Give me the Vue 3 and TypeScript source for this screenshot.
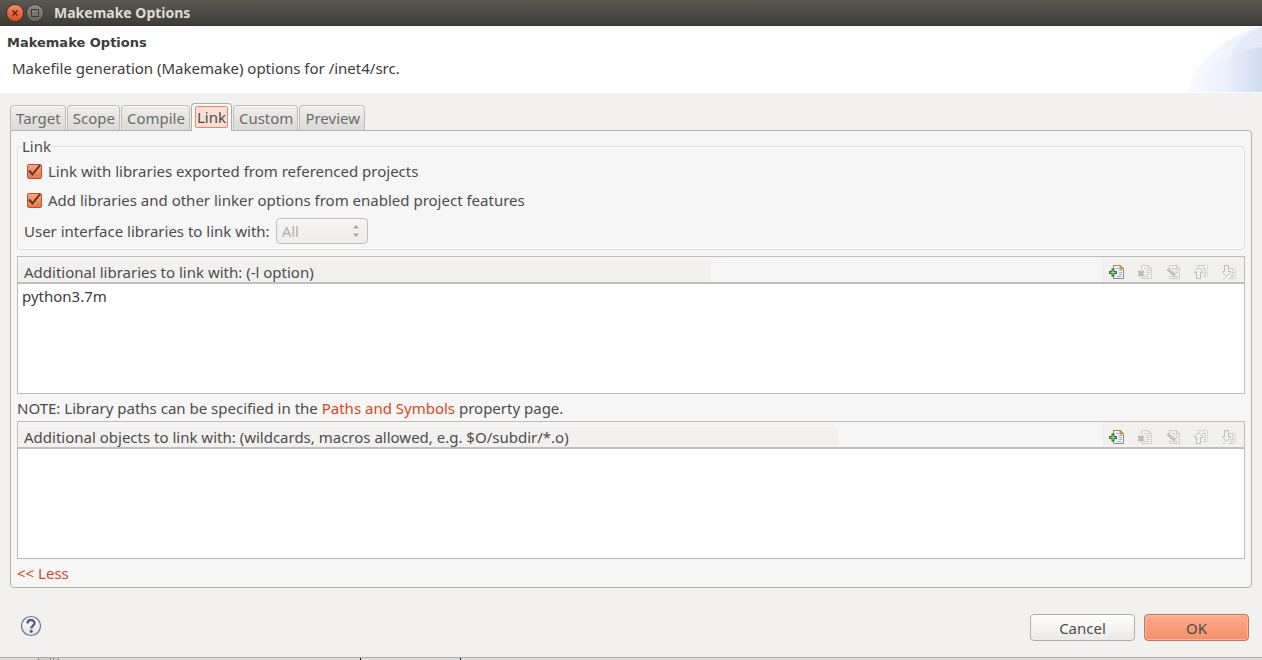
<script setup lang="ts">
import { ref } from 'vue'

interface Tool {
  id: string
  label: string
  disabled: boolean
}

interface ListBox {
  id: string
  title: string
  items: string[]
}

const tabs: string[] = ['Target', 'Scope', 'Compile', 'Link', 'Custom', 'Preview']
const activeTab = ref('Link')
const exported = ref(true)
const features = ref(true)
const uiLibs = ref('All')

const tools: Tool[] = [
  { id: 'add', label: 'Add', disabled: false },
  { id: 'remove', label: 'Delete', disabled: true },
  { id: 'edit', label: 'Edit', disabled: true },
  { id: 'up', label: 'Move up', disabled: true },
  { id: 'down', label: 'Move down', disabled: true },
]

const libraries: ListBox = {
  id: 'libs',
  title: 'Additional libraries to link with: (-l option)',
  items: ['python3.7m'],
}
const objects: ListBox = {
  id: 'objs',
  title: 'Additional objects to link with: (wildcards, macros allowed, e.g. $O/subdir/*.o)',
  items: [],
}
const lists: ListBox[] = [libraries, objects]
</script>

<template>
  <div class="window">
    <header class="titlebar">
      <button class="wm close" type="button" aria-label="Close">
        <svg width="16" height="16" viewBox="0 0 16 16"><path d="M5.500 5.500l5 5M10.500 5.500l-5 5" stroke="#57200f" stroke-width="1.400" /></svg>
      </button>
      <button class="wm max" type="button" aria-label="Maximize">
        <svg width="16" height="16" viewBox="0 0 16 16"><rect x="4.500" y="4.500" width="7" height="7" fill="none" stroke="#3a3935" /></svg>
      </button>
      <span class="caption">Makemake Options</span>
    </header>

    <section class="banner">
      <div class="banner-text">
        <h1>Makemake Options</h1>
        <p>Makefile generation (Makemake) options for /inet4/src.</p>
      </div>
      <svg class="swoosh" width="75" height="66" viewBox="0 0 75 66" aria-hidden="true">
        <defs>
          <linearGradient id="sw1" x1="0" x2="1"><stop offset="0" stop-color="#f8fafe" /><stop offset="1" stop-color="#e9effa" /></linearGradient>
          <linearGradient id="sw2" x1="0" x2="1"><stop offset="0" stop-color="#f8faff" /><stop offset=".5" stop-color="#ecf1fb" /><stop offset="1" stop-color="#d0dbf3" /></linearGradient>
        </defs>
        <path d="M0 66C3 44 34 11 75 0V66Z" fill="url(#sw1)" />
        <path d="M44 30C50 16 60 7 75 1V30Z" fill="#dfe7f8" opacity=".7" />
        <path d="M0 66C4 56 8 52 14 48C32 35 52 24 75 21V66Z" fill="url(#sw2)" />
      </svg>
    </section>

    <main class="content">
      <div class="tabs" role="tablist">
        <button
          v-for="t in tabs"
          :key="t"
          type="button"
          role="tab"
          class="tab"
          :class="{ active: t === activeTab }"
          :aria-selected="t === activeTab"
          @click="activeTab = t"
        ><span>{{ t }}</span></button>
      </div>

      <div class="panel" role="tabpanel">
        <fieldset class="group">
          <legend>Link</legend>
          <label class="check">
            <span class="box">
              <input v-model="exported" type="checkbox" />
              <svg v-if="exported" width="18" height="18" viewBox="0 0 18 18"><path d="M5 8.500L8.500 12.500L16 3" fill="none" stroke="#5e3425" stroke-width="2" /></svg>
            </span>
            Link with libraries exported from referenced projects
          </label>
          <label class="check">
            <span class="box">
              <input v-model="features" type="checkbox" />
              <svg v-if="features" width="18" height="18" viewBox="0 0 18 18"><path d="M5 8.500L8.500 12.500L16 3" fill="none" stroke="#5e3425" stroke-width="2" /></svg>
            </span>
            Add libraries and other linker options from enabled project features
          </label>
          <div class="row">
            <label for="ui-libs">User interface libraries to link with:</label>
            <span class="combo">
              <select id="ui-libs" v-model="uiLibs" disabled>
                <option>All</option>
              </select>
              <svg width="8" height="14" viewBox="0 0 8 14"><path d="M1 4.500L4 1L7 4.500ZM1 9.500L4 13L7 9.500Z" fill="#a9a6a2" /></svg>
            </span>
          </div>
        </fieldset>

        <template v-for="(l, i) in lists" :key="l.id">
          <section class="list">
            <div class="list-head">
              <span :id="l.id" class="list-title">{{ l.title }}</span>
              <div class="tools">
                <button v-for="t in tools" :key="t.id" type="button" :aria-label="t.label" :disabled="t.disabled">
                  <svg v-if="t.id === 'add'" width="16" height="16" viewBox="0 0 16 16">
                    <path d="M4.500 1.500H11.500L14.500 4.500V14.500H4.500Z" fill="#f1f6fe" stroke="#8f8d68" />
                    <path d="M4 1.500H11.500M4.500 1V5" stroke="#b08a28" />
                    <path d="M11 1.500V5H14.500Z" fill="#e9a94e" stroke="#c98b33" />
                    <path d="M7 4.500H10M10 6.500H13M10 8.500H13M10 10.500H13M8 12.500H12" stroke="#92acdc" />
                    <path d="M2.500 4.500H5.500V7H8V10H5.500V12.500H2.500V10H0V7H2.500Z" fill="#1e7f45" />
                    <path d="M4 6V11M1.500 8.500H6.500" stroke="#b5dc6a" />
                  </svg>
                  <svg v-else-if="t.id === 'remove'" width="16" height="16" viewBox="0 0 16 16">
                    <path d="M4.500 6V1.500H11.500L14.500 4.500V14.500H4.500V12" fill="none" stroke="#d2d0cd" />
                    <path d="M11.500 1.500V4.500H14.500M7 4.500H10M9 6.500H13M9 8.500H13M9 10.500H13M7 12.500H12" fill="none" stroke="#d2d0cd" />
                    <path d="M1.500 7L6.500 12M6.500 7L1.500 12" stroke="#bdbab7" stroke-width="2.600" />
                  </svg>
                  <svg v-else-if="t.id === 'edit'" width="16" height="16" viewBox="0 0 16 16">
                    <path d="M4.500 5V1.500H11.500L14.500 4.500V14.500H4.500V11" fill="none" stroke="#d0cecb" />
                    <path d="M11.500 1.500V4.500H14.500M7 4.500H10M10 6.500H13M11 8.500H13M6 12.500H13" fill="none" stroke="#c9c7c4" />
                    <path d="M2.500 5L10 11" stroke="#b9b6b3" stroke-width="3" />
                    <path d="M3.500 5L9 9.500" stroke="#e2e0de" />
                  </svg>
                  <svg v-else-if="t.id === 'up'" width="16" height="16" viewBox="0 0 16 16">
                    <path d="M3 1.500H4M5 1.500H8M9 1.500H12M9 4.500H13M11 6.500H13M11 8.500H13M11 10.500H13M10 12.500H13" stroke="#c9c7c4" />
                    <path d="M14.500 1V13" stroke="#dfddda" />
                    <path d="M5.500 3.500L9.500 7.500V8.500H7.500V14.500H3.500V8.500H1.500V7.500Z" fill="#f1f0ee" stroke="#bebbb8" />
                  </svg>
                  <svg v-else width="16" height="16" viewBox="0 0 16 16">
                    <path d="M9 4.500H13M11 6.500H13M11 8.500H13M10 10.500H13M9 12.500H13M8 14.500H12M2 14.500H4" stroke="#c9c7c4" />
                    <path d="M14.500 4V15" stroke="#dfddda" />
                    <path d="M5.500 12.500L9.500 8.500V7.500H7.500V1.500H3.500V7.500H1.500V8.500Z" fill="#f1f0ee" stroke="#bebbb8" />
                  </svg>
                </button>
              </div>
            </div>
            <ul class="items" role="listbox" :aria-labelledby="l.id">
              <li v-for="item in l.items" :key="item" role="option">{{ item }}</li>
            </ul>
          </section>
          <p v-if="i === 0" class="note">
            NOTE: Library paths can be specified in the <a href="#">Paths and Symbols</a> property page.
          </p>
        </template>
        <p class="less"><a href="#">&lt;&lt; Less</a></p>
      </div>
    </main>

    <footer class="footer">
      <button class="help" type="button" aria-label="Help">
        <svg width="22" height="22" viewBox="0 0 22 22">
          <defs><linearGradient id="hg" x1="0" y1="0" x2="0" y2="1"><stop offset="0" stop-color="#fff" /><stop offset="1" stop-color="#e2e4e6" /></linearGradient></defs>
          <circle cx="11" cy="11" r="9.500" fill="url(#hg)" stroke="#64738c" stroke-width="1.200" />
          <path d="M7.500 8.500C7.500 3.800 14.600 4 14.500 8.200C14.500 10.500 11.200 10.700 11.200 13.600" fill="none" stroke="#4e5f80" stroke-width="2.400" />
          <circle cx="11.200" cy="16.200" r="1.500" fill="#4e5f80" />
        </svg>
      </button>
      <button class="btn" type="button">Cancel</button>
      <button class="btn ok" type="button">OK</button>
    </footer>
    <div class="behind" aria-hidden="true">
      <svg width="480" height="2" viewBox="0 0 480 2">
        <rect x="39" width="20" height="2" fill="#d0cecb" />
        <path d="M38.500 0V2M50.500 0V2M53.500 0V2M58.500 0V2" stroke="#8f8d8b" />
        <path d="M360.500 0V2M460.500 0V2" stroke="#111" />
      </svg>
    </div>
  </div>
</template>

<style>
body {
  margin: 0;
}
</style>

<style scoped>
.window {
  display: flex;
  flex-direction: column;
  min-height: 100vh;
  background: #f2f1f0;
  color: #4c4c4c;
  font: 15px/20px "Noto Sans", "Open Sans", sans-serif;
}
button,
select {
  font: inherit;
  color: inherit;
}
h1,
p,
ul {
  margin: 0;
  padding: 0;
}
a {
  color: #dd4814;
  text-decoration: none;
}
.titlebar {
  display: flex;
  align-items: center;
  gap: 4px;
  height: 26px;
  padding: 0 7px;
  box-sizing: border-box;
  background: linear-gradient(#5b584f, #3d3c37);
  border-bottom: 1px solid #35342f;
}
.wm {
  width: 16px;
  height: 16px;
  padding: 0;
  border: 0;
  border-radius: 50%;
  box-shadow: 0 0 0 1px #38362f;
}
.wm svg {
  display: block;
}
.close {
  background: linear-gradient(#f58763, #de4c1f);
}
.max {
  background: linear-gradient(#8f8d86, #66645d);
}
.caption {
  margin-left: 7px;
  color: #dfdbd2;
  font-size: 14px;
  font-weight: 700;
}
.banner {
  display: flex;
  justify-content: space-between;
  height: 67px;
  background: #fff;
  color: #3c3c3c;
}
.banner-text {
  padding: 7px;
}
h1 {
  font: 700 13px/20px "DejaVu Sans", sans-serif;
}
.banner p {
  padding: 5px;
}
.content {
  flex: 1;
  display: flex;
  flex-direction: column;
  padding: 10px 10px 0;
}
.tabs {
  display: flex;
  align-items: flex-end;
  gap: 1px;
  height: 27px;
}
.tab {
  height: 25px;
  padding: 0 4px 0 5px;
  border: 1px solid #c0bdb9;
  border-bottom: 0;
  border-radius: 4px 4px 0 0;
  background: linear-gradient(#f0efed, #dcdad7);
  box-shadow: inset 0 1px #fafafa;
  color: #6c6c6c;
  line-height: 20px;
}
.tab.active {
  height: 28px;
  margin-bottom: -1px;
  padding: 0 3px 2px;
  border-color: #b0ada9;
  background: #f8f8f7;
  color: #4c4c4c;
  z-index: 1;
}
.tab.active span {
  display: block;
  padding: 0 1px;
  border: 1px solid #ee8963;
  border-radius: 2px;
  background: #f9dfd5;
}
.panel {
  flex: 1;
  display: flex;
  flex-direction: column;
  padding: 6px;
  border: 1px solid #b6b2ad;
  border-radius: 0 4px 4px 4px;
  background: #f6f6f6;
}
.group {
  min-width: 0;
  margin: 0 0 6px;
  padding: 6px;
  border: 1px solid #dcdcdb;
  border-radius: 4px;
  box-shadow: inset 0 0 0 1px #fcfcfc;
}
.group legend {
  height: 18px;
  padding: 0;
  margin-left: -2px;
  line-height: 18px;
}
.check {
  display: flex;
  align-items: center;
  gap: 4px;
  width: max-content;
  height: 20px;
  margin-bottom: 9px;
}
.box {
  display: grid;
  width: 20px;
  height: 18px;
}
.box > * {
  grid-area: 1 / 1;
}
.box input {
  appearance: none;
  box-sizing: border-box;
  width: 15px;
  height: 15px;
  margin: 2px 3px;
  border: 1px solid #b3532f;
  border-radius: 2px;
  background: linear-gradient(#f8a483, #ee7647);
}
.row {
  display: flex;
  align-items: center;
  gap: 6px;
  height: 24px;
}
.combo {
  display: grid;
  align-items: center;
}
.combo > * {
  grid-area: 1 / 1;
}
.combo svg {
  justify-self: end;
  margin-right: 8px;
}
.combo select {
  appearance: none;
  width: 92px;
  height: 26px;
  padding: 0 5px;
  border: 1px solid #c3c0bc;
  border-radius: 4px;
  background: linear-gradient(#f6f5f4, #eeedeb);
  color: #b1aead;
  opacity: 1;
}
.list {
  flex: 1;
  display: flex;
  flex-direction: column;
  border: 1px solid #bebbb7;
}
.list-head {
  display: flex;
  height: 25px;
  border-bottom: 2px solid #c1bebb;
}
.list-head::after {
  content: "";
  flex: 1 1 0;
}
.list-title {
  flex: 1 1 auto;
  margin-top: 5px;
  padding: 0 6px;
  background: #f2f1f0;
  line-height: 20px;
}
.tools {
  order: 1;
  display: flex;
  align-items: center;
  gap: 12px;
  padding: 4px 7px 0;
  background: #f2f1f0;
}
.tools button {
  width: 16px;
  height: 16px;
  padding: 0;
  border: 0;
  background: none;
}
.tools svg {
  display: block;
}
.items {
  flex: 1;
  min-height: 80px;
  padding: 2px 4px;
  background: #fff;
  color: #3c3c3c;
  list-style: none;
}
.note {
  padding: 4px 0 3px;
}
.less {
  padding-top: 4px;
  height: 18px;
}
.footer {
  display: flex;
  align-items: center;
  gap: 9px;
  padding: 26px 13px 16px 20px;
}
.help {
  margin-right: auto;
  padding: 0 0 3px;
  border: 0;
  background: none;
}
.help svg {
  display: block;
}
.btn {
  width: 105px;
  height: 27px;
  padding: 0;
  border: 1px solid #b1aeaa;
  border-radius: 4px;
  background: linear-gradient(#fff, #ebeae8);
}
.btn.ok {
  border-color: #b57a62;
  background: linear-gradient(#fdac8c, #f58f67);
  box-shadow: inset 0 0 0 1px #fdb699;
}
.behind {
  height: 2px;
  overflow: hidden;
  border-top: 1px solid #aeacaa;
  background: #dcdbd9;
}
.behind svg {
  display: block;
}
</style>
